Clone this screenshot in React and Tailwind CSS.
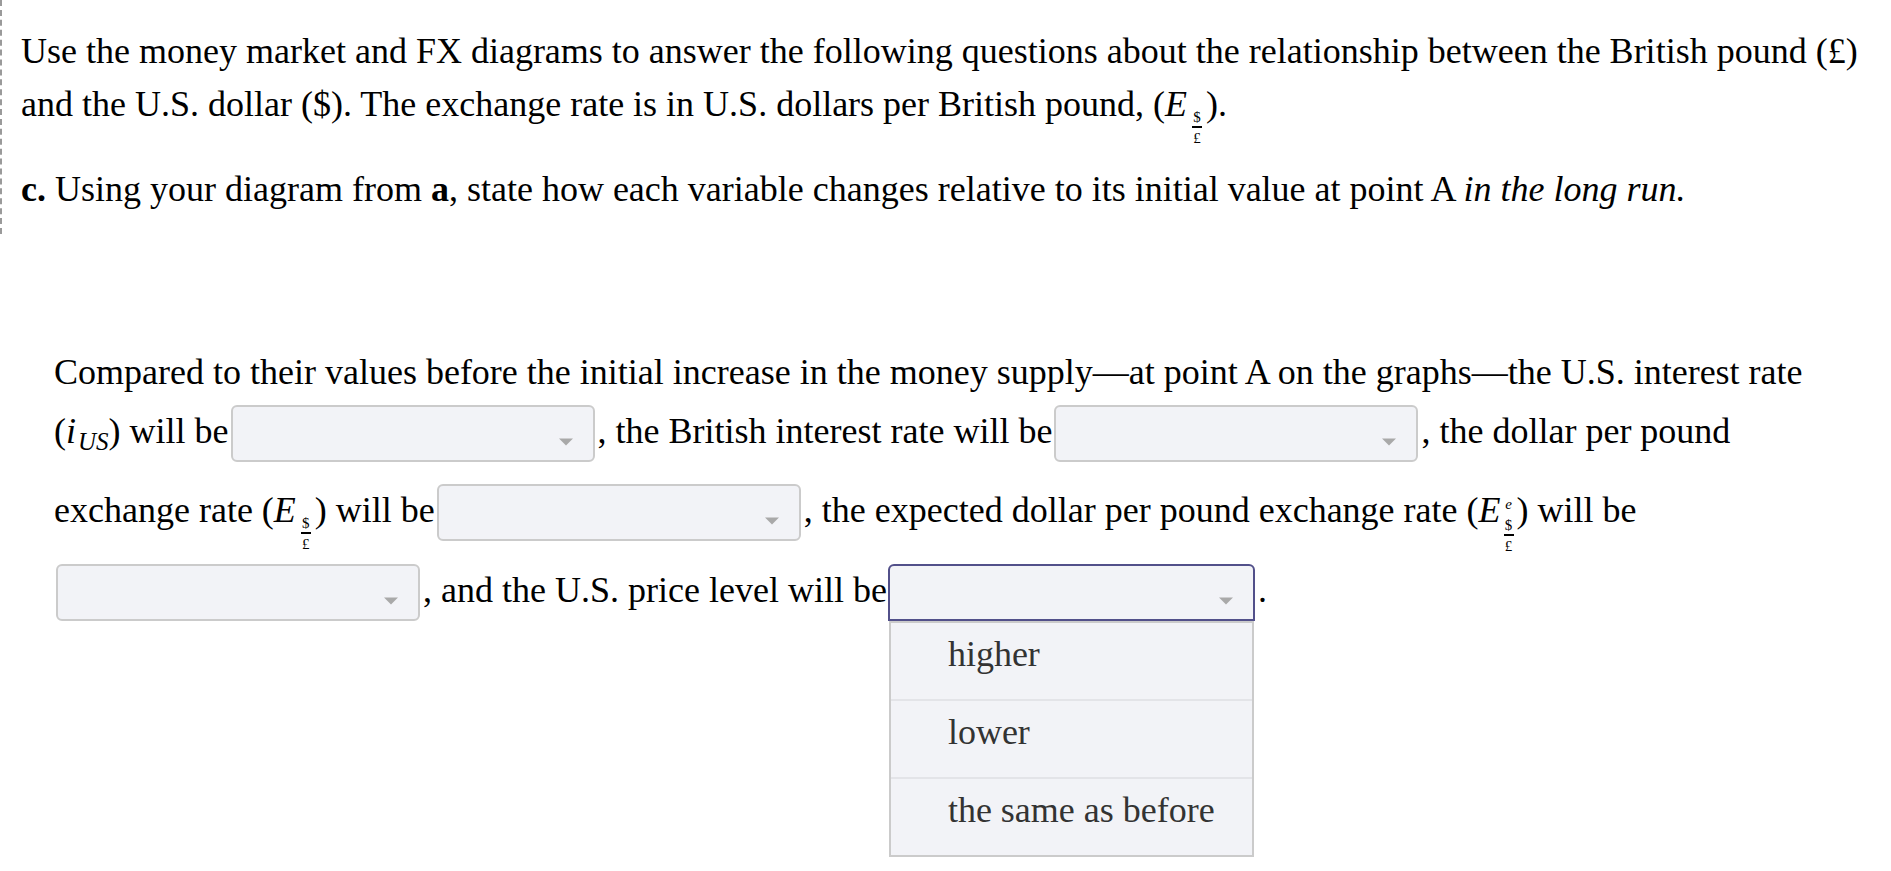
import React from "react";

function Arrow() {
  return (
    <svg
      className="absolute right-[20px] top-[31px]"
      width="14"
      height="8"
      viewBox="0 0 14 8"
      aria-hidden="true"
    >
      <path d="M0 0.5H14L7 7.5Z" fill="#a9a9a9" />
    </svg>
  );
}

function Select() {
  return (
    <span className="relative inline-block w-[364px] h-[57px] my-[11px] ml-[2px] mr-[3px] align-[-30px] bg-[#f2f3f7] border-2 border-[#cbcbcb] rounded-[6px]">
      <Arrow />
    </span>
  );
}

function OpenSelect() {
  const items = ["higher", "lower", "the same as before"];
  return (
    <span className="relative inline-block w-[367px] h-[57px] my-[11px] ml-[1px] mr-[3px] align-[-30px] bg-[#f2f3f7] border-2 border-[#52508a] rounded-t-[6px]">
      <Arrow />
      <span className="absolute left-[-1px] top-[55px] block w-[365px] bg-[#f2f3f7] border-2 border-[#cbcbcb] text-[#333333] text-[36px] leading-[43px]">
        <span className="block h-[76px] pt-[10px] pl-[57px]">{items[0]}</span>
        <span className="block h-[78px] pt-[10px] pl-[57px] border-t-2 border-[#e3e4e8]">{items[1]}</span>
        <span className="block h-[78px] pt-[10px] pl-[57px] border-t-2 border-[#e3e4e8]">{items[2]}</span>
      </span>
    </span>
  );
}

function Frac() {
  return (
    <span className="inline-flex flex-col items-center align-[-6px] ml-[5px] mr-[4px] text-[15px]">
      <span className="block leading-[14px]">$</span>
      <span className="block w-[10px] h-[2px] bg-black mt-[2px]"></span>
      <span className="block leading-[14px] mt-[3px]">£</span>
    </span>
  );
}

function FracE() {
  return (
    <span className="inline-flex flex-col items-center align-[13px] ml-[3px] mr-[3px] text-[15px]">
      <span className="block leading-[12px] italic mb-[8px]">e</span>
      <span className="block leading-[14px]">$</span>
      <span className="block w-[10px] h-[2px] bg-black mt-[2px]"></span>
      <span className="block leading-[14px] mt-[3px]">£</span>
    </span>
  );
}

export default function App() {
  return (
    <div className="min-h-screen bg-white text-black font-['Liberation_Serif','Times_New_Roman',serif]">
      <div className="h-[234px] border-l-2 border-dashed border-[#9a9a9a] pl-[19px] pt-[25px]">
        <p className="text-[36px] leading-[53px]">
          Use the money market and FX diagrams to answer the following questions about the relationship between the British pound (£) and the U.S. dollar ($). The exchange rate is in U.S. dollars per British pound, (<span className="italic">E</span>
          <Frac />).
        </p>
        <p className="mt-[23px] text-[36px] leading-[43px]">
          <span className="font-bold">c.</span> Using your diagram from <span className="font-bold">a</span>, state how each variable changes relative to its initial value at point A <span className="italic">in the long run.</span>
        </p>
      </div>
      <div className="mt-[117px] pl-[54px] pr-[30px]">
        <p className="text-[36px] leading-[43px]">
          Compared to their values before the initial increase in the money supply—at point A on the graphs—the U.S. interest rate (<span className="italic">i</span>
          <span className="italic text-[25px] leading-none align-[-7px] ml-[2px]">US</span>) will be<Select />, the British interest rate will be<Select />, the dollar per pound exchange rate (<span className="italic">E</span>
          <Frac />) will be<Select />, the expected dollar per pound exchange rate (<span className="italic">E</span>
          <FracE />) will be<Select />, and the U.S. price level will be<OpenSelect />.
        </p>
      </div>
    </div>
  );
}
